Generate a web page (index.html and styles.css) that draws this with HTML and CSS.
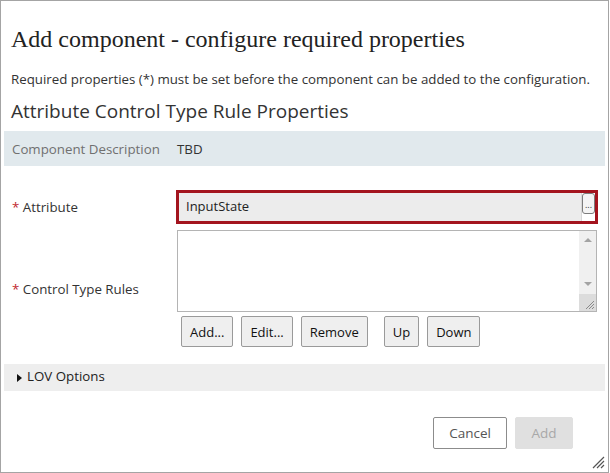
FILE: index.html
```html
<!DOCTYPE html>
<html>
<head>
<meta charset="utf-8">
<link rel="stylesheet" href="styles.css">
</head>
<body>
<div class="dialog">
  <h1 class="title">Add component - configure required properties</h1>
  <p class="note">Required properties (*) must be set before the component can be added to the configuration.</p>
  <h2 class="section">Attribute Control Type Rule Properties</h2>
  <div class="desc-band">
    <span class="desc-label">Component Description</span>
    <span class="desc-value">TBD</span>
  </div>
  <div class="row row-attr">
    <label class="lbl"><span class="req">*</span> Attribute</label>
    <div class="picker">
      <span class="picker-value">InputState</span>
      <div class="picker-side"><button class="picker-btn">...</button></div>
    </div>
  </div>
  <div class="row row-rules">
    <label class="lbl"><span class="req">*</span> Control Type Rules</label>
    <div class="rules">
      <div class="listbox">
        <div class="list-area"></div>
        <div class="scrollbar">
          <div class="sb-track">
            <span class="arrow-up"></span>
            <span class="arrow-down"></span>
          </div>
          <div class="sb-corner">
            <svg width="17" height="17" viewBox="0 0 17 17"><path d="M7 15 L15 7 M10 15 L15 10 M13 15 L15 13" stroke="#8a8a8a" stroke-width="1" fill="none"/></svg>
          </div>
        </div>
      </div>
      <div class="btns">
        <button class="btn">Add...</button>
        <button class="btn">Edit...</button>
        <button class="btn">Remove</button>
        <button class="btn btn-gap">Up</button>
        <button class="btn">Down</button>
      </div>
    </div>
  </div>
  <div class="lov"><span class="tri"></span>LOV Options</div>
  <div class="footer">
    <button class="fbtn cancel">Cancel</button>
    <button class="fbtn add" disabled>Add</button>
  </div>
  <svg class="grip" width="14" height="14" viewBox="0 0 14 14"><path d="M2 13 L13 2 M6 13 L13 6 M10 13 L13 10" stroke="#555" stroke-width="1.2" fill="none"/></svg>
</div>
</body>
</html>
```
FILE: styles.css
```css
html, body {
  margin: 0;
  padding: 0;
  background: #fff;
}
body {
  font-family: "Open Sans", "Noto Sans", sans-serif;
  color: #333;
}
.dialog {
  position: relative;
  width: 609px;
  height: 473px;
  box-sizing: border-box;
  border: 1px solid #a4a4a4;
  padding: 0 3px;
  background: #fff;
}
.title {
  margin: 24px 0 0 0;
  padding-left: 7px;
  font-family: "Liberation Serif", serif;
  font-weight: normal;
  font-size: 24px;
  line-height: 28px;
  color: #222;
}
.note {
  margin: 17px 0 0 0;
  padding-left: 7px;
  font-size: 13.3px;
  line-height: 18px;
  color: #333;
}
.section {
  margin: 11px 0 0 0;
  padding-left: 7px;
  font-size: 19px;
  line-height: 24px;
  font-weight: 400;
  color: #333;
}
.desc-band {
  margin-top: 8px;
  height: 35px;
  box-sizing: border-box;
  padding: 2px 0 0 8px;
  line-height: 33px;
  background: #e1e9ed;
  font-size: 13.3px;
  display: flex;
}
.desc-label {
  width: 165px;
  color: #707070;
}
.desc-value {
  color: #333;
}
.row {
  display: flex;
  align-items: center;
}
.lbl {
  width: 164px;
  padding-left: 8px;
  font-size: 13.3px;
  line-height: 34px;
  color: #333;
  flex-shrink: 0;
}
.req {
  color: #c0272d;
}
.row-attr {
  margin-top: 24px;
  height: 34px;
}
.picker {
  width: 422px;
  height: 34px;
  box-sizing: border-box;
  border: 3px solid #a3141e;
  background: #ececec;
  display: flex;
}
.picker-value {
  flex: 1;
  padding-left: 7px;
  font-size: 13px;
  line-height: 27px;
  color: #222;
}
.picker-side {
  width: 13px;
  background: #fff;
  border-left: 1px solid #d8d8d8;
}
.picker-btn {
  display: block;
  width: 13px;
  height: 21px;
  margin: 0;
  padding: 0;
  box-sizing: border-box;
  border: 1px solid #7c7c7c;
  border-radius: 3px;
  background: #f4f4f4;
  font-family: "Open Sans", sans-serif;
  font-size: 9px;
  line-height: 22px;
  color: #333;
  text-align: center;
}
.row-rules {
  margin-top: 6px;
  height: 117px;
}
.rules {
  margin-left: 1px;
  width: 420px;
}
.listbox {
  height: 82px;
  box-sizing: border-box;
  border: 1px solid #b4b4b4;
  display: flex;
}
.list-area {
  flex: 1;
}
.scrollbar {
  width: 17px;
  display: flex;
  flex-direction: column;
}
.sb-track {
  flex: 1;
  background: #f0f0f0;
  position: relative;
}
.arrow-up, .arrow-down {
  position: absolute;
  left: 5px;
  width: 0;
  height: 0;
  border-left: 4px solid transparent;
  border-right: 4px solid transparent;
}
.arrow-up {
  top: 7px;
  border-bottom: 4px solid #a3a3a3;
}
.arrow-down {
  top: 51px;
  border-top: 4px solid #a3a3a3;
}
.sb-corner {
  height: 17px;
  background: #dcdcdc;
}
.sb-corner svg {
  display: block;
}
.btns {
  margin-top: 4px;
  padding-left: 4px;
  display: flex;
  gap: 8px;
}
.btn {
  height: 31px;
  box-sizing: border-box;
  padding: 0 8px;
  border: 1px solid #9a9a9a;
  border-radius: 2px;
  background: #efefef;
  font-family: "Open Sans", sans-serif;
  font-size: 13px;
  color: #111;
}
.btn-gap {
  margin-left: 8px;
}
.lov {
  margin-top: 17px;
  height: 27px;
  background: #eeeeee;
  font-size: 13.3px;
  line-height: 25px;
  color: #222;
  display: flex;
  align-items: center;
  padding-left: 13px;
  padding-bottom: 2px;
  box-sizing: border-box;
}
.tri {
  width: 0;
  height: 0;
  border-top: 4px solid transparent;
  border-bottom: 4px solid transparent;
  border-left: 5px solid #111;
  margin-right: 5px;
  margin-top: 2px;
}
.footer {
  margin-top: 26px;
  display: flex;
  justify-content: flex-end;
  gap: 8px;
  padding-right: 32px;
}
.fbtn {
  height: 32px;
  box-sizing: border-box;
  border-radius: 2px;
  font-family: "Open Sans", sans-serif;
  font-size: 13.5px;
}
.cancel {
  width: 74px;
  border: 1px solid #8c8c8c;
  background: #fff;
  color: #555;
}
.add {
  width: 58px;
  border: 1px solid #e0e0e0;
  background: #e0e0e0;
  color: #a8a8a8;
}
.grip {
  position: absolute;
  right: 3px;
  bottom: 3px;
}
```
